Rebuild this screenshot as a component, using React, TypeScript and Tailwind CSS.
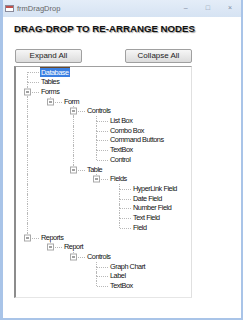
import React from 'react';

type Node = { label: string; children?: Node[] };

const tree: Node[] = [
  { label: 'Database' },
  { label: 'Tables' },
  {
    label: 'Forms',
    children: [
      {
        label: 'Form',
        children: [
          {
            label: 'Controls',
            children: [
              { label: 'List Box' },
              { label: 'Combo Box' },
              { label: 'Command Buttons' },
              { label: 'TextBox' },
              { label: 'Control' },
            ],
          },
          {
            label: 'Table',
            children: [
              {
                label: 'Fields',
                children: [
                  { label: 'HyperLink Field' },
                  { label: 'Date Field' },
                  { label: 'Number Field' },
                  { label: 'Text Field' },
                  { label: 'Field' },
                ],
              },
            ],
          },
        ],
      },
    ],
  },
  {
    label: 'Reports',
    children: [
      {
        label: 'Report',
        children: [
          {
            label: 'Controls',
            children: [
              { label: 'Graph Chart' },
              { label: 'Label' },
              { label: 'TextBox' },
            ],
          },
        ],
      },
    ],
  },
];

type Row = { label: string; trail: boolean[]; last: boolean; first: boolean; open: boolean };

function flatten(nodes: Node[], trail: boolean[], out: Row[]) {
  nodes.forEach((n, i) => {
    const last = i === nodes.length - 1;
    out.push({ label: n.label, trail, last, first: trail.length === 0 && i === 0, open: !!n.children });
    if (n.children) flatten(n.children, [...trail, last], out);
  });
  return out;
}

const rows = flatten(tree, [], []);

function TreeRow({ row }: { row: Row }) {
  const selected = row.first;
  return (
    <div className="flex h-[9.72px] items-center">
      {row.trail.map((last, i) => (
        <div key={i} className="relative h-full w-[23px] shrink-0">
          {!last && <div className="absolute left-[11px] top-0 bottom-0 border-l border-dotted border-[#b8b8b8]" />}
        </div>
      ))}
      <div className="relative h-full w-[24px] shrink-0">
        {!row.first && <div className="absolute left-[11px] top-0 h-1/2 border-l border-dotted border-[#b8b8b8]" />}
        {!row.last && <div className="absolute left-[11px] top-1/2 bottom-0 border-l border-dotted border-[#b8b8b8]" />}
        <div className="absolute left-[12px] right-[1px] top-1/2 border-t border-dotted border-[#b8b8b8]" />
        {row.open && (
          <div className="absolute left-[8px] top-1/2 flex h-[7px] w-[7px] -translate-y-1/2 items-center justify-center border border-[#a8a8a8] bg-white">
            <div className="h-px w-[3px] bg-[#444]" />
          </div>
        )}
      </div>
      <span
        className={
          selected
            ? 'h-[10px] border-t border-[#6b4a2a] bg-[#3a7fe2] px-[1px] leading-[9px] text-white'
            : 'px-[1px] leading-[10px] text-[#111]'
        }
      >
        {row.label}
      </span>
    </div>
  );
}

export default function App() {
  return (
    <div className="flex h-[320px] w-[243px] flex-col border-b-2 border-l-[3px] border-r-2 border-[#a9c4e8] font-['Liberation_Sans',Arial,sans-serif]">
      <div className="flex h-[17px] shrink-0 items-center bg-gradient-to-b from-[#e4edf8] to-[#d6e3f3] pl-[2px] pr-[9px]">
        <div className="flex h-[7px] w-[9px] flex-col border border-[#8a8a9a] bg-white">
          <div className="h-[2px] bg-[#c0504d]" />
        </div>
        <span className="ml-[3px] text-[7.5px] text-[#666]">frmDragDrop</span>
        <div className="ml-auto flex items-center gap-[18px] text-[7px] text-[#7d8aa0]">
          <span>–</span>
          <span>□</span>
          <span>×</span>
        </div>
      </div>
      <div className="flex flex-1 flex-col bg-white pl-[11px]">
        <h1 className="mt-[6px] text-[9.7px] font-bold leading-[12px] text-[#111] [text-shadow:1px_1px_1px_#9a9a9a]">
          DRAG-DROP TO RE-ARRANGE NODES
        </h1>
        <div className="mt-[14px] flex w-[178px] justify-between pl-[1px]">
          {['Expand All', 'Collapse All'].map((t) => (
            <button
              key={t}
              className="flex h-[14px] w-[67px] items-center justify-center rounded-[2px] border border-[#a0a0a0] bg-gradient-to-b from-[#f6f6f6] to-[#dcdcdc] text-[8px] text-[#222]"
            >
              {t}
            </button>
          ))}
        </div>
        <div className="mt-[3px] h-[232px] w-[178px] border-b border-l-2 border-r border-t border-b-[#e6e6e6] border-l-[#8c8c8c] border-r-[#e0e0e0] border-t-[#a0a0a0] pt-[0.5px] text-[7.3px] tracking-[-0.45px]">
          {rows.map((r, i) => (
            <TreeRow key={i} row={r} />
          ))}
        </div>
      </div>
    </div>
  );
}
